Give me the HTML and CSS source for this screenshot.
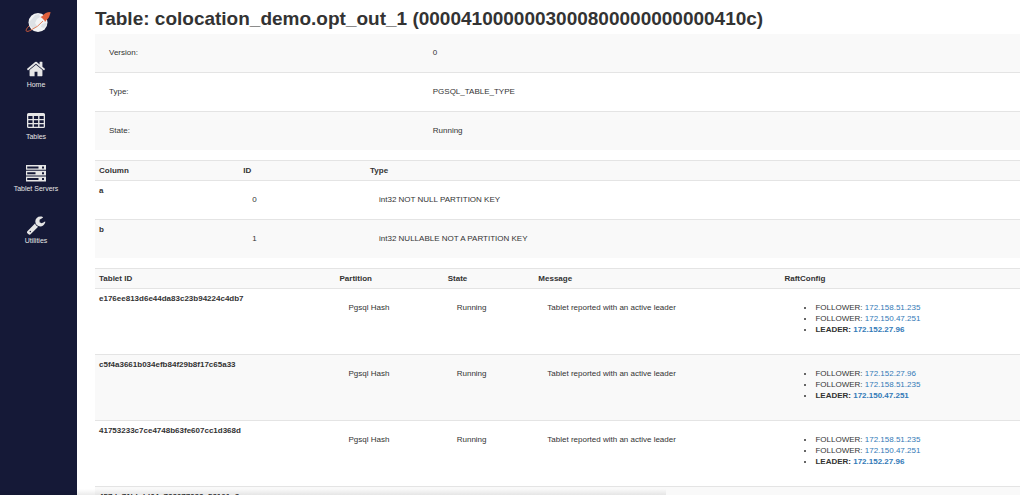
FILE: index.html
```html
<!DOCTYPE html>
<html lang="en">
<head>
  <meta charset="UTF-8" />
  <meta name="viewport" content="width=device-width, initial-scale=1.0" />
  <title>Table: colocation_demo.opt_out_1</title>
  <link rel="stylesheet" href="styles.css">
</head>
<body>

  <div class="page">
    <nav class="sidebar">
      <a class="logo" href="/" aria-label="YugabyteDB">
        <svg viewBox="0 0 26 22">
          <path d="M4 15C-1 20 1 22 6 19" fill="none" stroke="#c9583c" stroke-width="1"/>
          <circle cx="13" cy="11.5" r="9.5" fill="#f3f4f5"/>
          <path d="M10 4l4-1 1 3-3 2-2 4 2 3-3 3-4-3-1-4 3-3zM17 13l4-1 1 1-3 4-3-1z" fill="#dde1e5"/>
          <path d="M6 19Q13 16 18 10" fill="none" stroke="#e0825f" stroke-width="1"/>
          <path d="M25.500 1Q20 1 17.500 5l-2 1 1.500 1 2.500 2.500.5 1.500 1.500-2Q25 6 25.500 1z" fill="#e0603c"/>
        </svg>
      </a>
      <a class="nav-item" href="/">
        <svg viewBox="0 0 1792 1792"><path d="M1472 992v480q0 26-19 45t-45 19h-384v-384h-256v384h-384q-26 0-45-19t-19-45v-480q0-1 .5-3t.5-3l575-474 575 474q1 2 1 6zm223-69l-62 74q-8 9-21 11h-3q-13 0-21-7l-692-577-692 577q-12 8-24 7-13-2-21-11l-62-74q-8-10-7-23.500t11-21.500l719-599q32-26 76-26t76 26l244 204v-195q0-14 9-23t23-9h192q14 0 23 9t9 23v408l219 182q10 8 11 21.500t-7 23.500z"/></svg>
        <span>Home</span>
      </a>
      <a class="nav-item" href="/tables">
        <svg viewBox="0 0 20 20"><path fill-rule="evenodd" d="M2.500 2h15A1.500 1.500 0 0 1 19 3.500v12a1.500 1.500 0 0 1-1.500 1.500h-15A1.500 1.500 0 0 1 1 15.500v-12A1.500 1.500 0 0 1 2.500 2zM2.300 5v3h4.200V5zM7.900 5v3h4.200V5zM13.500 5v3h4.200V5zM2.300 9.200v2.800h4.200V9.200zM7.900 9.200v2.800h4.200V9.200zM13.500 9.200v2.800h4.200V9.200zM2.300 13.200v2.600h4.200v-2.600zM7.900 13.200v2.600h4.200v-2.600zM13.500 13.200v2.600h4.200v-2.600z"/></svg>
        <span>Tables</span>
      </a>
      <a class="nav-item" href="/tablet-servers">
        <svg viewBox="0 0 20 20"><path fill-rule="evenodd" d="M0 2h20v4.800H0zM1.200 3.400v2h11.300v-2zM16 3.400v2h2v-2zM0 7.800h20v4.800H0zM1.200 9.200v2h8.300v-2zM16 9.200v2h2v-2zM0 13.600h20v4.800H0zM1.200 15v2h11.300v-2zM16 15v2h2v-2z"/></svg>
        <span>Tablet Servers</span>
      </a>
      <a class="nav-item" href="/utilz">
        <svg viewBox="0 0 1792 1792"><path d="M448 1472q0-26-19-45t-45-19-45 19-19 45 19 45 45 19 45-19 19-45zm644-420l-682 682q-37 37-90 37-52 0-91-37l-106-108q-38-36-38-90 0-53 38-91l681-681q39 98 114.500 173.500t173.500 114.500zm634-435q0 39-23 106-47 134-164.500 217.500t-258.500 83.500q-185 0-316.500-131.500t-131.500-316.500 131.500-316.500 316.500-131.500q58 0 121.500 16.500t107.500 46.500q16 11 16 28t-16 28l-293 169v224l193 107q5-3 79-48.500t135.500-81 70.500-35.500q15 0 23.500 10t8.500 25z"/></svg>
        <span>Utilities</span>
      </a>
    </nav>

    <main class="content">
      <h1>Table: colocation_demo.opt_out_1 (0000410000003000800000000000410c)</h1>

      <table class="info">
        <colgroup><col class="info-name"><col></colgroup>
        <tr><td><div class="cell">Version:</div></td><td><div class="cell">0</div></td></tr>
        <tr><td><div class="cell">Type:</div></td><td><div class="cell">PGSQL_TABLE_TYPE</div></td></tr>
        <tr><td><div class="cell">State:</div></td><td><div class="cell">Running</div></td></tr>
      </table>

      <table>
        <colgroup><col class="col-name"><col class="col-id"><col></colgroup>
        <tr><th>Column</th><th>ID</th><th>Type</th></tr>
        <tr><th>a</th><td><div class="cell">0</div></td><td><div class="cell">int32 NOT NULL PARTITION KEY</div></td></tr>
        <tr><th>b</th><td><div class="cell">1</div></td><td><div class="cell">int32 NULLABLE NOT A PARTITION KEY</div></td></tr>
      </table>

      <table>
        <colgroup><col class="tablet-id"><col class="tablet-partition"><col class="tablet-state"><col class="tablet-message"><col></colgroup>
        <tr><th>Tablet ID</th><th>Partition</th><th>State</th><th>Message</th><th>RaftConfig</th></tr>
        <tr>
          <th>e176ee813d6e44da83c23b94224c4db7</th>
          <td><div class="cell">Pgsql Hash</div></td>
          <td><div class="cell">Running</div></td>
          <td><div class="cell">Tablet reported with an active leader</div></td>
          <td>
            <ul class="cell">
              <li>FOLLOWER: <a href="#">172.158.51.235</a></li>
              <li>FOLLOWER: <a href="#">172.150.47.251</a></li>
              <li><b>LEADER: <a href="#">172.152.27.96</a></b></li>
            </ul>
          </td>
        </tr>
        <tr>
          <th>c5f4a3661b034efb84f29b8f17c65a33</th>
          <td><div class="cell">Pgsql Hash</div></td>
          <td><div class="cell">Running</div></td>
          <td><div class="cell">Tablet reported with an active leader</div></td>
          <td>
            <ul class="cell">
              <li>FOLLOWER: <a href="#">172.152.27.96</a></li>
              <li>FOLLOWER: <a href="#">172.158.51.235</a></li>
              <li><b>LEADER: <a href="#">172.150.47.251</a></b></li>
            </ul>
          </td>
        </tr>
        <tr>
          <th>41753233c7ce4748b63fe607cc1d368d</th>
          <td><div class="cell">Pgsql Hash</div></td>
          <td><div class="cell">Running</div></td>
          <td><div class="cell">Tablet reported with an active leader</div></td>
          <td>
            <ul class="cell">
              <li>FOLLOWER: <a href="#">172.158.51.235</a></li>
              <li>FOLLOWER: <a href="#">172.150.47.251</a></li>
              <li><b>LEADER: <a href="#">172.152.27.96</a></b></li>
            </ul>
          </td>
        </tr>
        <tr><th>457da71bbdd64e788677033e53121e8e</th><td></td><td></td><td></td><td></td></tr>
      </table>
    </main>
  </div>

</body>
</html>
```
FILE: styles.css
```css
* {
  box-sizing: border-box;
}

body {
  margin: 0;
  font: 8px/11px "Liberation Sans", Arial, sans-serif;
  color: #333;
  background: #fff;
}

.page {
  position: relative;
  display: flex;
  height: calc(100vh - 1px);
  overflow: hidden;
}

/* fade along the bottom edge */
.page::after {
  content: "";
  position: absolute;
  left: 0;
  right: 35%;
  bottom: 0;
  height: 6px;
  background: linear-gradient(transparent, rgba(0, 0, 0, 0.08));
  pointer-events: none;
}

a {
  color: #337ab7;
  text-decoration: none;
}

/* sidebar */
.sidebar {
  flex: none;
  display: flex;
  flex-direction: column;
  align-items: center;
  width: 77px;
  padding: 11px 5px 0 0;
  background: #151937;
}

.logo {
  margin: 0 0 26px 3px;
}

.logo svg {
  display: block;
  width: 26px;
  height: 22px;
}

.nav-item {
  display: flex;
  flex-direction: column;
  align-items: center;
  height: 52px;
  color: #e6e6e6;
  font-size: 7px;
}

.nav-item svg {
  width: 20px;
  height: 20px;
  fill: #e6e6e6;
}

/* content */
.content {
  flex: 1;
  min-width: 0;
  padding: 8px 4px 0 18px;
}

h1 {
  margin: 0 0 5px;
  font-size: 19px;
  line-height: 21px;
}

table {
  width: 100%;
  margin-bottom: 10px;
  table-layout: fixed;
  border-collapse: separate;
  border-spacing: 0;
}

th,
td {
  padding: 4px;
  border-top: 1px solid #e4e4e4;
  text-align: left;
  vertical-align: top;
}

tr:nth-child(odd) {
  background: #f9f9f9;
}

.info tr:first-child td {
  border-top: 0;
}

.cell {
  margin: 0;
  padding: 9px 9px 10px;
}

.info .cell {
  padding-left: 10px;
}

ul.cell {
  padding: 9px 9px 15px 31px;
}

/* column widths */
.info-name { width: 35%; }
.col-name { width: 15.6%; }
.col-id { width: 13.7%; }
.tablet-id { width: 26%; }
.tablet-partition { width: 11.7%; }
.tablet-state { width: 9.8%; }
.tablet-message { width: 26.6%; }
```
